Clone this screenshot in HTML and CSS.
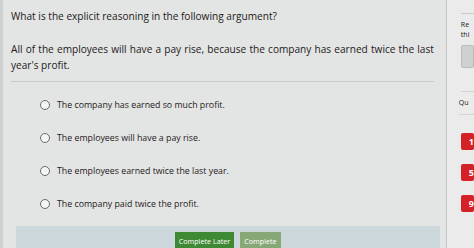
FILE: index.html
```html
<!DOCTYPE html>
<html>
<head>
    <link rel="stylesheet" href="styles.css">
</head>
<body>
    <div class="screen">
        <div class="question-panel">
            <div class="prompt">What is the explicit reasoning in the following argument?</div>
            <div class="argument">All of the employees will have a pay rise, because the company has earned twice the last year's profit.</div>

            <div class="options">
                <label class="option"><span class="radio"></span>The company has earned so much profit.</label>
                <label class="option"><span class="radio"></span>The employees will have a pay rise.</label>
                <label class="option"><span class="radio"></span>The employees earned twice the last year.</label>
                <label class="option"><span class="radio"></span>The company paid twice the profit.</label>
            </div>

            <div class="actions">
                <button class="btn btn-later">Complete Later</button>
                <button class="btn btn-complete">Complete</button>
            </div>
        </div>

        <div class="side-panel">
            <div class="side-top">
                <div class="side-note">Re<br>thi</div>
                <div class="side-box"></div>
            </div>
            <div class="side-head">Qu</div>
            <div class="badges">
                <span class="badge">1</span>
                <span class="badge">5</span>
                <span class="badge">9</span>
            </div>
        </div>
    </div>
</body>
</html>
```

FILE: styles.css
```css
body {
    margin: 0;
    padding: 0;
    font-family: "Open Sans", Arial, sans-serif;
    color: #1f2020;
    background-color: #e3e5e4;
}

.screen {
    display: flex;
    height: 248px;
    overflow: hidden;
    border-left: 3px solid #cfd1d0;
}

.question-panel {
    width: 434px;
    padding: 9px 11px 0 8px;
    display: flex;
    flex-direction: column;
}

.prompt {
    font-size: 10.1px;
    line-height: 14px;
}

.argument {
    margin-top: 18px;
    font-size: 10.1px;
    line-height: 16px;
    text-align: justify;
    padding-bottom: 8px;
    border-bottom: 1px solid #c9cbca;
}

.options {
    display: flex;
    flex-direction: column;
    gap: 19px;
    margin-top: 16px;
    padding-left: 29px;
}

.option {
    display: flex;
    align-items: center;
    font-size: 8.8px;
    line-height: 14px;
}

.radio {
    width: 8px;
    height: 8px;
    border: 1px solid #6a6c6b;
    border-radius: 50%;
    background-color: #f4f5f4;
    margin-right: 7px;
}

.actions {
    margin: 15px -6px 0 5px;
    background-color: #cdd8dc;
    padding-top: 6px;
    display: flex;
    justify-content: center;
    gap: 6px;
    flex: 1;
}

.btn {
    border: none;
    font-family: "Open Sans", Arial, sans-serif;
    font-size: 7.2px;
    color: #ffffff;
    padding: 0;
    height: 18px;
    white-space: nowrap;
}

.btn-later {
    background-color: #3e8a34;
    width: 59px;
}

.btn-complete {
    background-color: #86a876;
    width: 41px;
}

.side-panel {
    flex: 1;
    margin-left: 1px;
    border-left: 1px solid #c6c7c6;
    background-color: #eaebea;
    padding-left: 14px;
}

.side-top {
    margin-top: 13px;
    border-top: 1px solid #c9caca;
    padding-top: 6px;
    height: 71px;
    border-bottom: 1px solid #d4d5d4;
}

.side-note {
    font-size: 7px;
    line-height: 10px;
}

.side-box {
    margin-top: 5px;
    height: 21px;
    background-color: #cfd1d1;
    border: 1px solid #b9bbba;
    border-radius: 2px;
}

.side-head {
    font-size: 7px;
    line-height: 12px;
    padding: 5px 0 5px 0;
    border-bottom: 1px solid #d4d5d4;
    margin-left: -2px;
}

.badges {
    display: flex;
    flex-direction: column;
    gap: 14px;
    margin-top: 18px;
}

.badge {
    display: block;
    height: 17px;
    background-color: #d42126;
    border-radius: 2px;
    color: #ffffff;
    font-size: 9px;
    font-weight: bold;
    line-height: 17px;
    padding-left: 8px;
}
```
